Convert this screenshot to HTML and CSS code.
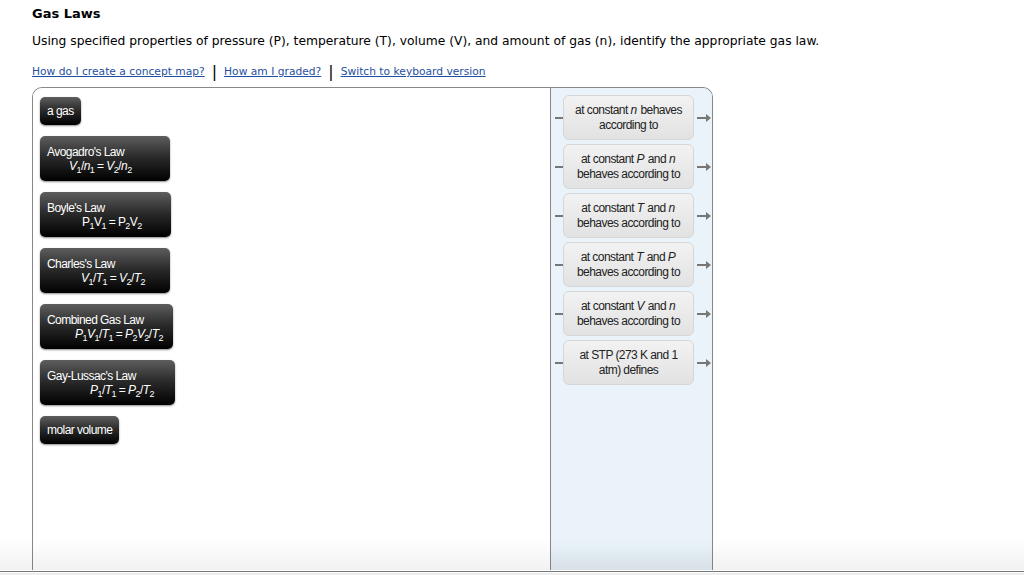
FILE: index.html
```html
<!DOCTYPE html>
<html>
<head>
<meta charset="utf-8">
<link rel="stylesheet" href="styles.css">
</head>
<body>
<div class="page">
  <h1 class="title">Gas Laws</h1>
  <p class="desc">Using specified properties of pressure (P), temperature (T), volume (V), and amount of gas (n), identify the appropriate gas law.</p>
  <div class="links">
    <a href="#">How do I create a concept map?</a><span class="sep">|</span><a href="#">How am I graded?</a><span class="sep">|</span><a href="#">Switch to keyboard version</a>
  </div>
  <div class="panel">
    <div class="workspace">
      <div class="tile single">a gas</div>
      <div class="tile law">
        <div class="name">Avogadro's Law</div>
        <div class="formula f-avo"><i>V</i><sub>1</sub>/<i>n</i><sub>1</sub> = <i>V</i><sub>2</sub>/<i>n</i><sub>2</sub></div>
      </div>
      <div class="tile law">
        <div class="name">Boyle's Law</div>
        <div class="formula f-boyle">P<sub>1</sub>V<sub>1</sub> = P<sub>2</sub>V<sub>2</sub></div>
      </div>
      <div class="tile law">
        <div class="name">Charles's Law</div>
        <div class="formula f-charles"><i>V</i><sub>1</sub>/<i>T</i><sub>1</sub> = <i>V</i><sub>2</sub>/<i>T</i><sub>2</sub></div>
      </div>
      <div class="tile law">
        <div class="name">Combined Gas Law</div>
        <div class="formula f-comb"><i>P</i><sub>1</sub><i>V</i><sub>1</sub>/<i>T</i><sub>1</sub> = <i>P</i><sub>2</sub><i>V</i><sub>2</sub>/<i>T</i><sub>2</sub></div>
      </div>
      <div class="tile law">
        <div class="name">Gay-Lussac's Law</div>
        <div class="formula f-gay"><i>P</i><sub>1</sub>/<i>T</i><sub>1</sub> = <i>P</i><sub>2</sub>/<i>T</i><sub>2</sub></div>
      </div>
      <div class="tile single">molar volume</div>
    </div>
    <div class="relations">
      <div class="rel"><span class="dash"></span><div class="box"><span>at constant <i>n</i> behaves according to</span></div><span class="arrow"></span></div>
      <div class="rel"><span class="dash"></span><div class="box"><span>at constant <i>P</i> and <i>n</i> behaves according to</span></div><span class="arrow"></span></div>
      <div class="rel"><span class="dash"></span><div class="box"><span>at constant <i>T</i> and <i>n</i> behaves according to</span></div><span class="arrow"></span></div>
      <div class="rel"><span class="dash"></span><div class="box"><span>at constant <i>T</i> and <i>P</i> behaves according to</span></div><span class="arrow"></span></div>
      <div class="rel"><span class="dash"></span><div class="box"><span>at constant <i>V</i> and <i>n</i> behaves according to</span></div><span class="arrow"></span></div>
      <div class="rel"><span class="dash"></span><div class="box"><span>at STP (273 K and 1 atm) defines</span></div><span class="arrow"></span></div>
    </div>
  </div>
</div>
<div class="bottom-fade"></div>
</body>
</html>
```
FILE: styles.css
```css
html, body {
  margin: 0;
  padding: 0;
  background: #fff;
  height: 100%;
  overflow: hidden;
}
body {
  font-family: "DejaVu Sans", Verdana, sans-serif;
  color: #000;
}
.page {
  padding: 6px 0 0 32px;
}
.title {
  font-size: 13px;
  font-weight: bold;
  margin: 0;
  line-height: 16px;
}
.desc {
  font-size: 12.3px;
  margin: 11px 0 0 0;
  line-height: 16px;
}
.links {
  font-size: 10.7px;
  margin-top: 15px;
  line-height: 16px;
  display: flex;
  align-items: center;
}
.links a {
  color: #1f4fa0;
  text-decoration: underline;
}
.sep {
  font-size: 16px;
  margin: 0 7px;
  color: #000;
  line-height: 16px;
}
.panel {
  margin-top: 7px;
  width: 681px;
  height: 520px;
  display: grid;
  grid-template-columns: 518px 163px;
  border: 1px solid #888;
  border-bottom: none;
  border-radius: 10px 10px 0 0;
  box-sizing: border-box;
  overflow: hidden;
  box-shadow: inset 1px 1px 0 #ddd;
}
.workspace {
  background: #fff;
  border-right: 1px solid #888;
  padding: 9px 7px;
  display: flex;
  flex-direction: column;
  align-items: flex-start;
  gap: 11px;
}
.tile {
  font-family: "Liberation Sans", Arial, sans-serif;
  font-size: 12px;
  letter-spacing: -0.55px;
  color: #fff;
  background: linear-gradient(#5e5e5e 0%, #2c2c2c 45%, #000 100%);
  border-radius: 5px;
  box-shadow: 0 1px 2px rgba(0,0,0,0.45);
  box-sizing: border-box;
}
.tile.single {
  height: 28px;
  line-height: 28px;
  padding: 0 7px;
}
.tile.law {
  height: 45px;
  padding: 9px 7px 0 7px;
  line-height: 14px;
}
.tile .formula {
  white-space: nowrap;
}
.tile sub {
  font-size: 9px;
  vertical-align: -3px;
  line-height: 0;
}
.f-avo { padding-left: 22px; width: 94px; }
.f-boyle { padding-left: 35px; width: 82px; }
.f-charles { padding-left: 34px; width: 82px; }
.f-comb { padding-left: 28px; width: 91px; }
.f-gay { padding-left: 43px; width: 78px; }
.relations {
  background: linear-gradient(#e9f3f9 0%, #e9f3f9 88%, #dbe6ec 100%);
  padding: 7px 0 0 0;
  display: flex;
  flex-direction: column;
  gap: 4px;
}
.rel {
  display: flex;
  align-items: center;
  height: 45px;
}
.dash {
  width: 8px;
  height: 2px;
  background: #777;
  margin-left: 4px;
}
.box {
  width: 131px;
  height: 45px;
  box-sizing: border-box;
  font-family: "Liberation Sans", Arial, sans-serif;
  font-size: 12px;
  letter-spacing: -0.55px;
  line-height: 15px;
  color: #222;
  text-align: center;
  background: linear-gradient(#f2f2f2, #e2e2e2);
  border: 1px solid #d6d6d6;
  border-radius: 6px;
  display: flex;
  align-items: center;
  justify-content: center;
  padding: 0 9px;
}
.box span {
  display: block;
}
.box i {
  padding-right: 1px;
}
.arrow {
  position: relative;
  width: 10px;
  height: 2px;
  background: #777;
  margin-left: 3px;
}
.arrow::after {
  content: "";
  position: absolute;
  right: -4px;
  top: -3px;
  border-left: 5px solid #777;
  border-top: 4px solid transparent;
  border-bottom: 4px solid transparent;
}
.bottom-fade {
  position: fixed;
  left: 0;
  right: 0;
  bottom: 0;
  height: 36px;
  background: linear-gradient(rgba(0,0,0,0) 0%, rgba(0,0,0,0.05) 90%, #fff 90%);
  border-bottom: 2px solid #eee;
  box-sizing: border-box;
}
.bottom-fade::after {
  content: "";
  position: absolute;
  left: 0;
  right: 0;
  bottom: 1px;
  height: 1px;
  background: #777;
}
```
